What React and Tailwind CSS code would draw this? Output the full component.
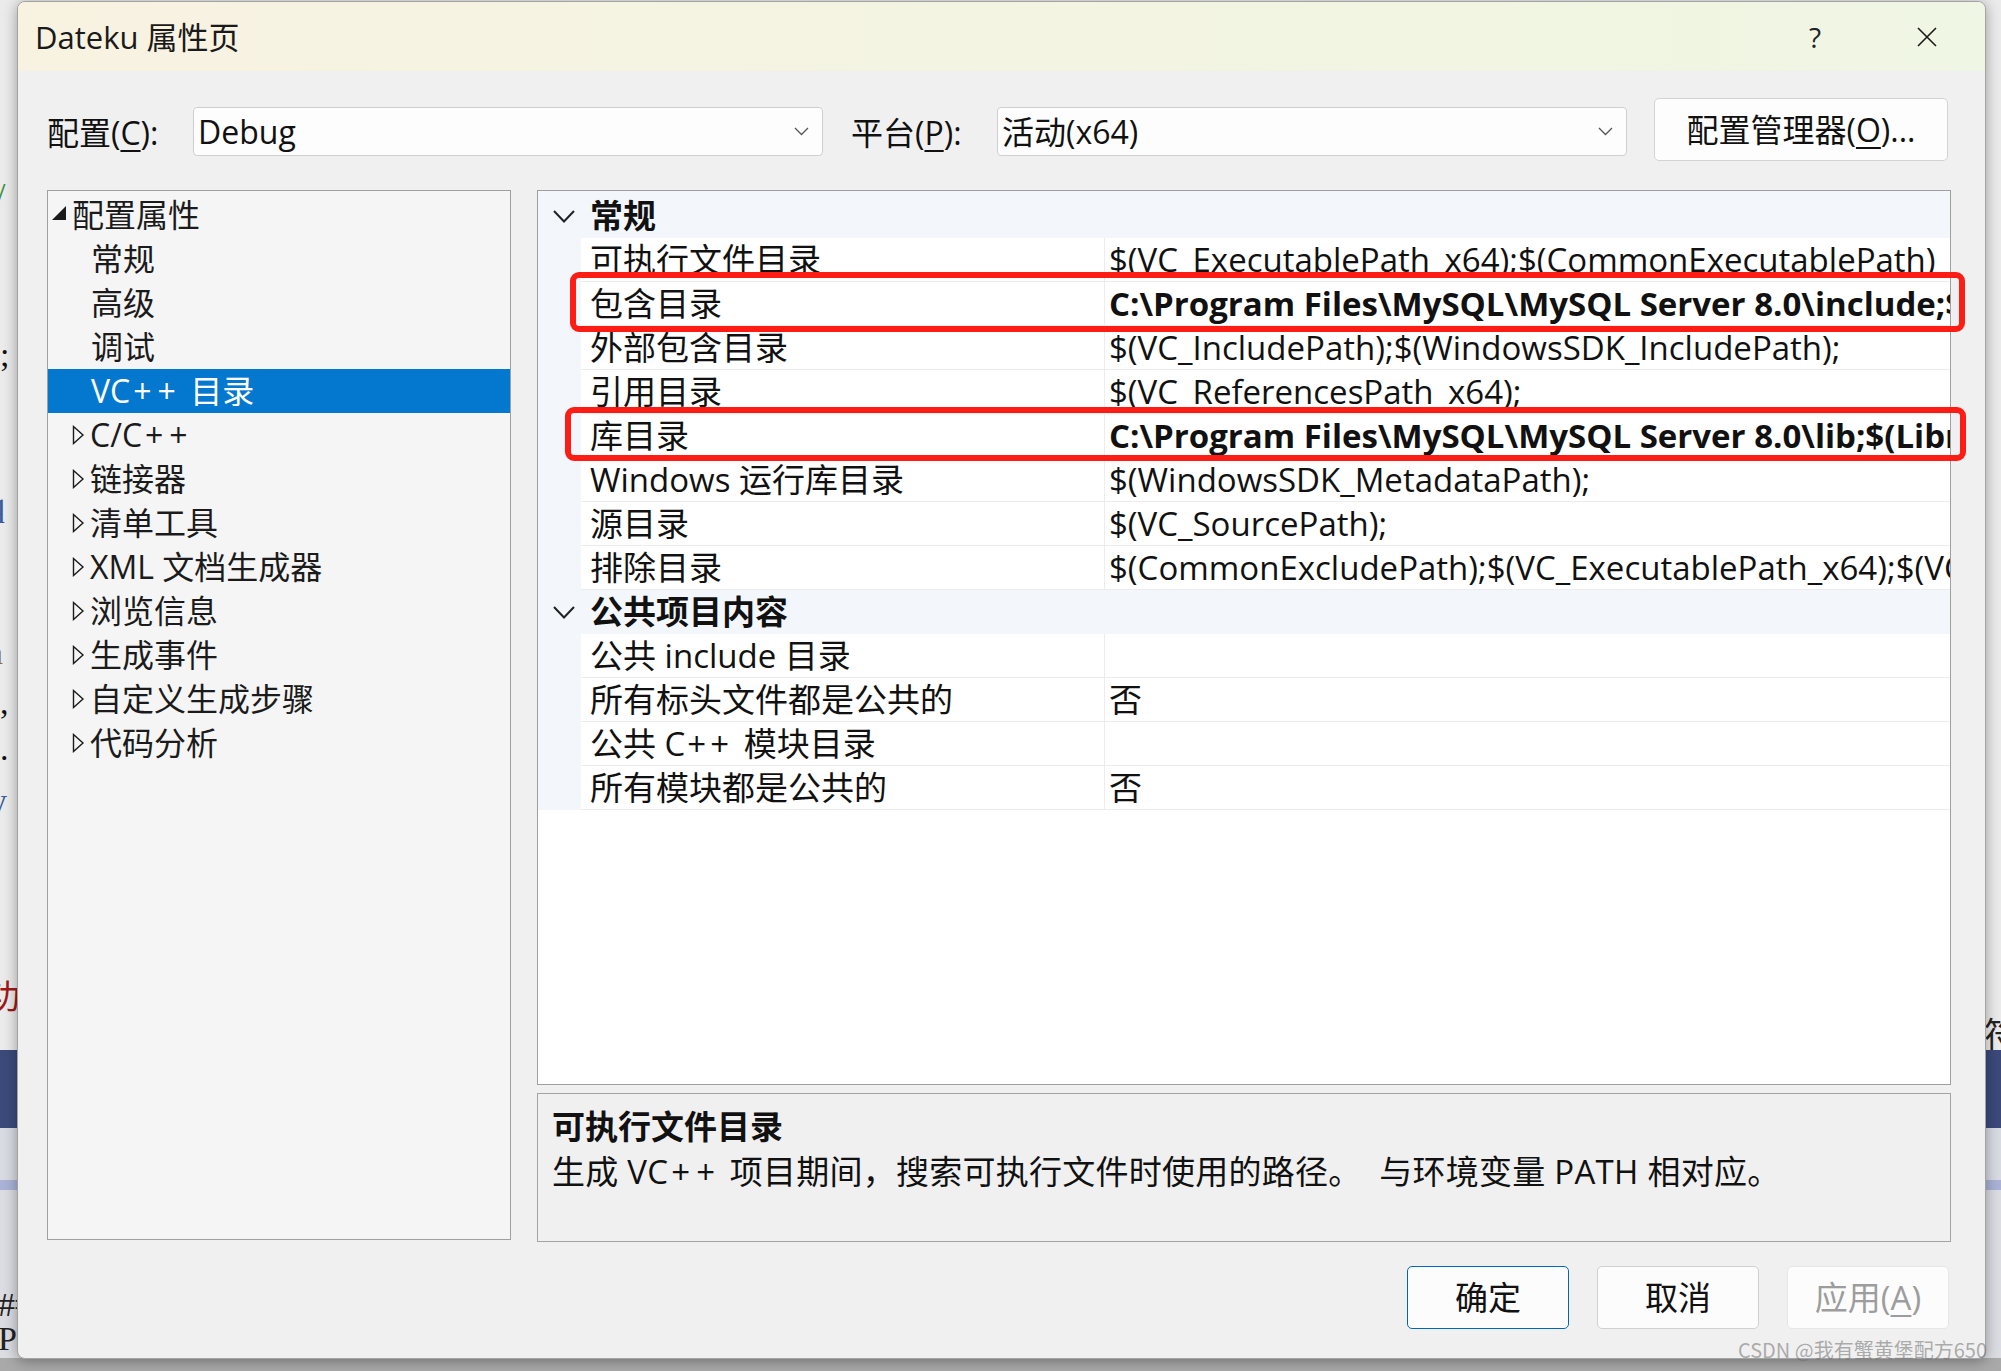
import React from "react";

const F = "font-['Open_Sans','Noto_Sans_CJK_SC',sans-serif]";

// Segoe-style "++" is set wider than Open Sans draws it, so the pluses get extra room
function fmt(text, wide = true) {
  const parts = text.split("++");
  if (parts.length === 1) return text;
  const out = [];
  parts.forEach((p, i) => {
    out.push(<React.Fragment key={`t${i}`}>{p}</React.Fragment>);
    if (i < parts.length - 1)
      out.push(
        <span key={`p${i}`} className={wide ? "ml-[3px] tracking-[6px]" : "px-[2px] tracking-[4px]"}>
          ++
        </span>
      );
  });
  return out;
}

function OpenTri() {
  return (
    <svg width="14" height="14" viewBox="0 0 14 14" className="shrink-0">
      <path d="M14 0 L14 14 L0 14 Z" fill="#1a1a1a" />
    </svg>
  );
}

function ClosedTri() {
  return (
    <svg width="13" height="20" viewBox="0 0 13 20" className="shrink-0">
      <path d="M1.5 1.5 L11 10 L1.5 18.5 Z" fill="none" stroke="#1a1a1a" strokeWidth="1.4" />
    </svg>
  );
}

function GroupChevron() {
  return (
    <svg width="22" height="13" viewBox="0 0 22 13" className="shrink-0">
      <path d="M1 1 L11 11.5 L21 1" fill="none" stroke="#222" strokeWidth="2" />
    </svg>
  );
}

function SelectChevron() {
  return (
    <svg width="15" height="9" viewBox="0 0 15 9" className="shrink-0">
      <path d="M1 1 L7.5 7.5 L14 1" fill="none" stroke="#555" strokeWidth="1.3" />
    </svg>
  );
}

function CloseGlyph() {
  return (
    <svg width="20" height="20" viewBox="0 0 20 20">
      <path d="M1 1 L19 19 M19 1 L1 19" fill="none" stroke="#1a1a1a" strokeWidth="1.6" />
    </svg>
  );
}

function Backdrop() {
  return (
    <div className="absolute inset-0 flex flex-col">
      <div className="h-[1050px] bg-[#ebebeb]" />
      <div className="h-[78px] bg-[#3b4a7b]" />
      <div className="h-[52px] bg-[#d9dbe3]" />
      <div className="h-[10px] bg-[#aab3d6]" />
      <div className="h-[168px] bg-[#dcdde2]" />
      <div className="flex-1 bg-[#a9a9a9]" />
    </div>
  );
}

function EditorScraps() {
  // fragments of the code editor peeking out on either side of the dialog
  const s = "absolute font-['Liberation_Serif',serif] text-[34px] leading-none";
  return (
    <>
      <span className={`${s} left-[-4px] top-[178px] text-[#3c8c3c]`}>/</span>
      <span className={`${s} left-[0px] top-[338px] text-[#111]`}>;</span>
      <span className={`${s} left-[-12px] top-[488px] text-[#3a5a9a]`}>q</span>
      <span className={`${s} left-[-14px] top-[636px] text-[#8a6a3a]`}>n</span>
      <span className={`${s} left-[0px] top-[686px] text-[#111]`}>,</span>
      <span className={`${s} left-[0px] top-[732px] text-[#111]`}>.</span>
      <span className={`${s} left-[-10px] top-[784px] text-[#3a5a9a]`}>y</span>
      <span className={`${s} left-[-14px] top-[978px] text-[#a01818] font-['Noto_Sans_CJK_SC',serif]`}>功</span>
      <span className={`${s} left-[-2px] top-[1288px] text-[#222]`}>##</span>
      <span className={`${s} left-[-2px] top-[1322px] text-[#222]`}>PR</span>
      <span className={`${s} left-[1984px] top-[1016px] text-[#222] font-['Noto_Sans_CJK_SC',serif] text-[30px]`}>符</span>
    </>
  );
}

function TitleBar() {
  return (
    <div className="h-[69px] shrink-0 flex items-center justify-between bg-linear-to-r from-[#f8f2e1] to-[#eff6e3] pl-[17px] pr-[2px]">
      <span className="text-[31px] leading-[40px] text-[#1a1a1a]">Dateku 属性页</span>
      <div className="flex h-full items-center">
        <div className="w-[112px] h-full flex items-center justify-center text-[28px] text-[#222]">?</div>
        <div className="w-[112px] h-full flex items-center justify-center">
          <CloseGlyph />
        </div>
      </div>
    </div>
  );
}

function Select({ value }) {
  return (
    <div className="mt-[4px] w-[630px] h-[49px] shrink-0 flex items-center justify-between bg-[#fdfdfd] border border-[#cfcfcf] rounded-[4px] pl-[4px] pr-[13px]">
      <span className="text-[32px] leading-[40px] text-[#111]">{value}</span>
      <SelectChevron />
    </div>
  );
}

function Accel({ children }) {
  return <span className="underline underline-offset-[5px] decoration-[2px]">{children}</span>;
}

function ConfigRow() {
  return (
    <div className="mt-[27px] h-[63px] shrink-0 flex items-center text-[32px] leading-[40px] text-[#111]">
      <span className="w-[146px] shrink-0 mt-[7px]">
        配置(<Accel>C</Accel>):
      </span>
      <Select value="Debug" />
      <span className="ml-[28px] w-[146px] shrink-0 mt-[7px]">
        平台(<Accel>P</Accel>):
      </span>
      <Select value="活动(x64)" />
      <button className="ml-[27px] w-[294px] h-[63px] shrink-0 flex items-center justify-center bg-[#fdfdfd] border border-[#d3d3d3] rounded-[5px] text-[32px] text-[#111]">
        配置管理器(<Accel>O</Accel>)...
      </button>
    </div>
  );
}

const TREE = [
  { label: "配置属性", kind: "open" },
  { label: "常规", kind: "leaf" },
  { label: "高级", kind: "leaf" },
  { label: "调试", kind: "leaf" },
  { label: "VC++ 目录", kind: "leaf", selected: true },
  { label: "C/C++", kind: "closed" },
  { label: "链接器", kind: "closed" },
  { label: "清单工具", kind: "closed" },
  { label: "XML 文档生成器", kind: "closed" },
  { label: "浏览信息", kind: "closed" },
  { label: "生成事件", kind: "closed" },
  { label: "自定义生成步骤", kind: "closed" },
  { label: "代码分析", kind: "closed" },
];

function Tree() {
  return (
    <div className="w-[464px] h-[1050px] shrink-0 border border-[#9f9f9f] bg-[#f5f5f5] pt-[2px] flex flex-col">
      {TREE.map((t) => (
        <div
          key={t.label}
          className={`h-[44px] shrink-0 flex items-center text-[32px] leading-[40px] whitespace-nowrap ${
            t.selected ? "bg-[#0477cf] text-white" : "text-[#1b1b1b]"
          }`}
        >
          {t.kind === "open" && (
            <>
              <span className="ml-[4px] mt-[-4px]">
                <OpenTri />
              </span>
              <span className="ml-[6px]">{t.label}</span>
            </>
          )}
          {t.kind === "leaf" && <span className="ml-[43px]">{fmt(t.label)}</span>}
          {t.kind === "closed" && (
            <>
              <span className="ml-[24px]">
                <ClosedTri />
              </span>
              <span className="ml-[5px]">{fmt(t.label)}</span>
            </>
          )}
        </div>
      ))}
    </div>
  );
}

const GENERAL = [
  ["可执行文件目录", "$(VC_ExecutablePath_x64);$(CommonExecutablePath)", false],
  ["包含目录", "C:\\Program Files\\MySQL\\MySQL Server 8.0\\include;$(IncludePath)", true],
  ["外部包含目录", "$(VC_IncludePath);$(WindowsSDK_IncludePath);", false],
  ["引用目录", "$(VC_ReferencesPath_x64);", false],
  ["库目录", "C:\\Program Files\\MySQL\\MySQL Server 8.0\\lib;$(LibraryPath)", true],
  ["Windows 运行库目录", "$(WindowsSDK_MetadataPath);", false],
  ["源目录", "$(VC_SourcePath);", false],
  ["排除目录", "$(CommonExcludePath);$(VC_ExecutablePath_x64);$(VC_LibraryPath_x64)", false],
];

const PUBLIC = [
  ["公共 include 目录", "", false],
  ["所有标头文件都是公共的", "否", false],
  ["公共 C++ 模块目录", "", false],
  ["所有模块都是公共的", "否", false],
];

function GroupRow({ label, first }) {
  return (
    <div className={`${first ? "h-[47px] pt-[3px]" : "h-[44px]"} shrink-0 flex items-center bg-[#f3f6fb]`}>
      <div className="w-[43px] shrink-0 flex justify-end pr-[6px]">
        <GroupChevron />
      </div>
      <span className="pl-[9px] font-bold text-[33px] leading-[40px] text-[#111]">{label}</span>
    </div>
  );
}

function PropRow({ name, value, bold }) {
  return (
    <div className="h-[44px] shrink-0 flex text-[33px] leading-[40px] text-[#111]">
      <div className="w-[43px] shrink-0 bg-[#f3f6fb]" />
      <div className="w-[524px] shrink-0 flex items-center pl-[9px] bg-white border-b border-r border-[#ececec] whitespace-pre overflow-hidden">
        {fmt(name, false)}
      </div>
      <div
        className={`flex-1 min-w-0 flex items-center pl-[4px] bg-white border-b border-[#ececec] whitespace-nowrap overflow-hidden ${
          bold ? "font-bold" : ""
        }`}
      >
        {value}
      </div>
    </div>
  );
}

function Grid() {
  return (
    <div className="h-[895px] shrink-0 border border-[#9f9f9f] bg-white flex flex-col overflow-hidden">
      <GroupRow label="常规" first />
      {GENERAL.map(([n, v, b]) => (
        <PropRow key={n} name={n} value={v} bold={b} />
      ))}
      <GroupRow label="公共项目内容" />
      {PUBLIC.map(([n, v, b]) => (
        <PropRow key={n} name={n} value={v} bold={b} />
      ))}
    </div>
  );
}

function Description() {
  return (
    <div className="mt-[8px] h-[149px] shrink-0 border border-[#a3a3a3] bg-[#f0f0f0] px-[14px] pt-[10px] flex flex-col text-[33px] leading-[45px] text-[#111]">
      <span className="font-bold">可执行文件目录</span>
      <span className="whitespace-pre tracking-[0.25px]">
        生成 VC<span className="ml-[3px] tracking-[6px]">++</span> 项目期间，搜索可执行文件时使用的路径。  与环境变量 PATH 相对应。
      </span>
    </div>
  );
}

function Buttons() {
  const base =
    "w-[162px] h-[63px] flex items-center justify-center rounded-[5px] text-[33px] leading-[40px] bg-[#fcfcfc]";
  return (
    <div className="mt-[24px] h-[63px] shrink-0 flex justify-end gap-[28px] pr-[2px]">
      <button className={`${base} border-[1.5px] border-[#0067c0] text-[#111]`}>确定</button>
      <button className={`${base} border border-[#d0d0d0] text-[#111]`}>取消</button>
      <button className={`${base} border border-[#e6e6e6] bg-[#f7f7f7] text-[#9d9d9d]`}>
        应用(<Accel>A</Accel>)
      </button>
    </div>
  );
}

export default function App() {
  return (
    <div className={`relative w-[2001px] h-[1371px] overflow-hidden ${F}`}>
      <Backdrop />
      <EditorScraps />
      <div className="absolute left-[17px] top-[1px] w-[1969px] h-[1358px] flex flex-col rounded-[8px] border border-[#a3a3a3] bg-[#f0f0f0] shadow-[0_2px_14px_rgba(0,0,0,0.35)] overflow-hidden">
        <TitleBar />
        <div className="flex-1 flex flex-col pl-[29px] pr-[34px]">
          <ConfigRow />
          <div className="mt-[29px] h-[1052px] shrink-0 flex gap-[26px]">
            <Tree />
            <div className="w-[1414px] shrink-0 flex flex-col">
              <Grid />
              <Description />
            </div>
          </div>
          <Buttons />
        </div>
      </div>
      {/* highlight frames drawn over the include and library rows */}
      <div className="absolute left-[570px] top-[272px] w-[1395px] h-[60px] border-[6px] border-[#fd1d14] rounded-[9px]" />
      <div className="absolute left-[565px] top-[407px] w-[1401px] h-[54px] border-[6px] border-[#fd1d14] rounded-[9px]" />
      <div className="absolute right-[14px] top-[1336px] text-[20px] leading-[28px] text-[rgba(110,110,110,0.55)] font-['Noto_Sans_CJK_SC',sans-serif]">
        CSDN @我有蟹黄堡配方650
      </div>
    </div>
  );
}
